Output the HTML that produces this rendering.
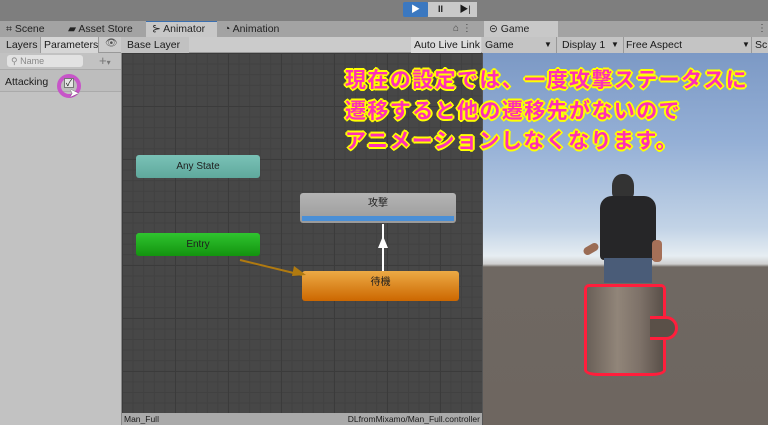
<!DOCTYPE html>
<html><head><meta charset="utf-8"><style>
*{margin:0;padding:0;box-sizing:border-box}
body{width:768px;height:425px;overflow:hidden;position:relative;background:#7e7e7e;font-family:"Liberation Sans","Noto Sans CJK JP",sans-serif;font-size:11px;color:#1a1a1a}
.a{position:absolute}
.grid{background-color:#474747;background-image:linear-gradient(#3b3b3b 1px,transparent 1px),linear-gradient(90deg,#3b3b3b 1px,transparent 1px),linear-gradient(#414141 1px,transparent 1px),linear-gradient(90deg,#414141 1px,transparent 1px);background-size:53px 53px,53px 53px,10.6px 10.6px,10.6px 10.6px}
.node{position:absolute;border-radius:3px;text-align:center;font-size:10px;color:#1e1e1e}
.cap{position:absolute;left:345px;font-size:21px;font-weight:bold;color:#ff2fb4;white-space:nowrap;letter-spacing:1.4px;
text-shadow:0 0 2px #ff0,1px 1px 0 #ff0,-1px -1px 0 #ff0,1px -1px 0 #ff0,-1px 1px 0 #ff0,2px 0 0 #ff0,-2px 0 0 #ff0,0 2px 0 #ff0,0 -2px 0 #ff0}
</style></head><body>
<div class="a" style="left:403px;top:2px;width:25px;height:15px;background:#3b78c0;border-radius:2px;color:#fff;font-size:9px;text-align:center;line-height:15px">▶</div>
<div class="a" style="left:428px;top:2px;width:25px;height:15px;background:#c9c9c9;font-size:9px;text-align:center;line-height:15px;font-weight:bold">II</div>
<div class="a" style="left:453px;top:2px;width:24px;height:15px;background:#c9c9c9;font-size:9px;text-align:center;line-height:15px">▶|</div>
<div class="a" style="left:0;top:21px;width:768px;height:16px;background:#a3a3a3"></div>
<div class="a" style="left:6px;top:23px;font-size:10.5px;color:#222">⌗ Scene</div>
<div class="a" style="left:68px;top:23px;font-size:10.5px;color:#222">▰ Asset Store</div>
<div class="a" style="left:146px;top:21px;width:71px;height:16px;background:#c8c8c8;border-top:1px solid #3a6fb0"></div>
<div class="a" style="left:152px;top:23px;font-size:10.5px;color:#222">⊱ Animator</div>
<div class="a" style="left:224px;top:23px;font-size:10.5px;color:#222">◔ Animation</div>
<div class="a" style="left:453px;top:23px;font-size:10px;color:#444">⌂ ⋮</div>
<div class="a" style="left:484px;top:21px;width:74px;height:16px;background:#c8c8c8"></div>
<div class="a" style="left:489px;top:23px;font-size:10.5px;color:#222">⊝ Game</div>
<div class="a" style="left:757px;top:23px;font-size:10px;color:#444">⋮</div>
<div class="a" style="left:0;top:37px;width:482px;height:16px;background:#cbcbcb;border-bottom:1px solid #999"></div>
<div class="a" style="left:0;top:37px;width:41px;height:16px;background:#bdbdbd;border-right:1px solid #999;font-size:10.5px;line-height:16px;padding-left:6px">Layers</div>
<div class="a" style="left:41px;top:37px;width:58px;height:16px;background:#d6d6d6;border-right:1px solid #999;font-size:10.5px;line-height:16px;padding-left:3px">Parameters</div>
<div class="a" style="left:105px;top:38px;font-size:10px;color:#555">👁</div>
<div class="a" style="left:121px;top:37px;width:68px;height:16px;background:#c1c1c1;font-size:10.5px;line-height:16px;padding-left:6px">Base Layer</div>
<div class="a" style="left:411px;top:37px;width:70px;height:16px;background:#dcdcdc;font-size:10.5px;line-height:16px;padding-left:3px">Auto Live Link</div>
<div class="a" style="left:482px;top:37px;width:286px;height:16px;background:#c4c4c4"></div>
<div class="a" style="left:485px;top:37px;font-size:10.5px;line-height:16px">Game</div>
<div class="a" style="left:544px;top:37px;font-size:8px;line-height:16px">▼</div>
<div class="a" style="left:556px;top:37px;width:1px;height:16px;background:#999"></div>
<div class="a" style="left:562px;top:37px;font-size:10.5px;line-height:16px">Display 1</div>
<div class="a" style="left:611px;top:37px;font-size:8px;line-height:16px">▼</div>
<div class="a" style="left:623px;top:37px;width:1px;height:16px;background:#999"></div>
<div class="a" style="left:626px;top:37px;font-size:10.5px;line-height:16px">Free Aspect</div>
<div class="a" style="left:742px;top:37px;font-size:8px;line-height:16px">▼</div>
<div class="a" style="left:751px;top:37px;width:1px;height:16px;background:#999"></div>
<div class="a" style="left:755px;top:37px;font-size:10.5px;line-height:16px">Sc</div>
<div class="a" style="left:0;top:53px;width:121px;height:372px;background:#c2c2c2"></div>
<div class="a" style="left:7px;top:55px;width:76px;height:12px;background:#e2e2e2;border-radius:3px;font-size:9px;color:#888;padding-left:4px;line-height:12px">⚲ Name</div>
<div class="a" style="left:99px;top:53px;font-size:13px;color:#777">+<span style="font-size:8px">▾</span></div>
<div class="a" style="left:0;top:69px;width:121px;height:1px;background:#aaa"></div>
<div class="a" style="left:0;top:70px;width:121px;height:22px;background:#bdbdbd;border-bottom:1px solid #aaa"></div>
<div class="a" style="left:5px;top:76px;font-size:10.5px">Attacking</div>
<div class="a" style="left:57px;top:74px;width:24px;height:24px;border-radius:50%;border:4px solid #c755c8"></div>
<div class="a" style="left:64px;top:78px;width:10px;height:10px;background:#e5e5e5;border:1px solid #777;font-size:9px;line-height:8px;text-align:center">✓</div>
<div class="a" style="left:69px;top:86px;font-size:12px;color:#fff;text-shadow:0 0 1px #000">➤</div>
<div class="a" style="left:121px;top:53px;width:1px;height:372px;background:#888"></div>
<div class="a grid" style="left:122px;top:53px;width:360px;height:360px"></div>
<div class="node" style="left:136px;top:155px;width:124px;height:23px;background:linear-gradient(#7ac2b7,#5fa89c);line-height:23px">Any State</div>
<div class="node" style="left:136px;top:233px;width:124px;height:23px;background:linear-gradient(#2fc42f,#13930f);line-height:23px">Entry</div>
<div class="node" style="left:300px;top:193px;width:156px;height:30px;background:linear-gradient(#b4b4b4,#9a9a9a);line-height:22px">攻撃
<div style="position:absolute;left:2px;bottom:2px;right:2px;height:5px;background:#4a8fd6"></div></div>
<div class="node" style="left:302px;top:271px;width:157px;height:30px;background:linear-gradient(#ecaa45,#cc6700);line-height:24px">待機</div>
<svg class="a" style="left:122px;top:53px" width="360" height="360">
<line x1="118" y1="207" x2="180" y2="222" stroke="#b07a10" stroke-width="2"/>
<polygon points="172,213 184,222 170,223" fill="#b07a10"/>
<line x1="261" y1="171" x2="261" y2="218" stroke="#fff" stroke-width="2"/>
<polygon points="256,195 261,183 266,195" fill="#fff"/>
</svg>
<div class="a" style="left:122px;top:413px;width:360px;height:12px;background:#aaaaaa;font-size:8.5px;line-height:12px;padding:0 2px">Man_Full<span style="float:right">DLfromMixamo/Man_Full.controller</span></div>
<div class="a" style="left:482px;top:53px;width:1px;height:372px;background:#555"></div>
<div class="a" style="left:483px;top:53px;width:285px;height:372px;background:linear-gradient(#7c99c5 0px,#95b0d6 90px,#c2d3e6 175px,#e6edf2 203px,#cfcfcf 211px,#6f6862 214px,#6e6660 372px)"></div>
<div class="a" style="left:612px;top:174px;width:22px;height:26px;background:#333;border-radius:45% 45% 30% 30%"></div>
<div class="a" style="left:600px;top:196px;width:56px;height:64px;background:#262628;border-radius:12px 12px 4px 4px"></div>
<div class="a" style="left:583px;top:245px;width:16px;height:8px;background:#9a6c55;border-radius:4px;transform:rotate(-30deg)"></div>
<div class="a" style="left:652px;top:240px;width:10px;height:22px;background:#a57058;border-radius:4px"></div>
<div class="a" style="left:604px;top:258px;width:48px;height:25px;background:#4a5c78"></div>
<div class="a" style="left:584px;top:284px;width:82px;height:92px;border:3px solid #ff1e3c;border-radius:5px 5px 14px 14px/5px 5px 6px 6px;background:linear-gradient(90deg,#6a6058,#918579 40%,#7d7168 70%,#5a5049)"></div>
<div class="a" style="left:650px;top:316px;width:28px;height:24px;border:3px solid #ff1e3c;border-left:none;border-radius:0 12px 12px 0;background:#5a5048"></div>
<div class="cap" style="top:64px">現在の設定では、一度攻撃ステータスに</div>
<div class="cap" style="top:95px">遷移すると他の遷移先がないので</div>
<div class="cap" style="top:125px">アニメーションしなくなります。</div>
</body></html>
